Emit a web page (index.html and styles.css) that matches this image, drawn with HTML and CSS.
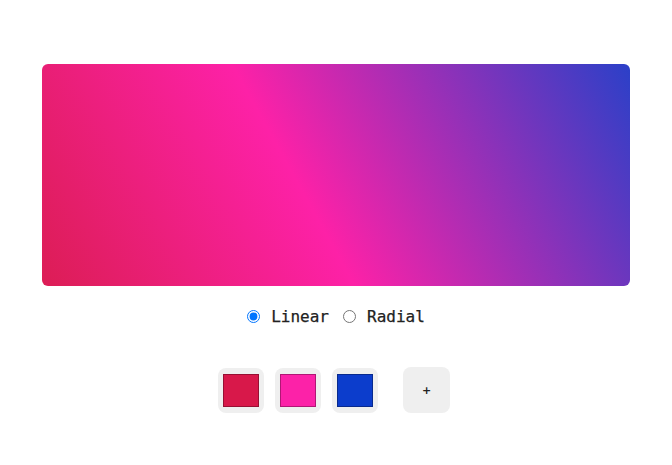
FILE: index.html
```html
<!DOCTYPE html>
<html lang="en">

    <head>
        <meta charset="UTF-8">
        <meta name="viewport" content="width=device-width, initial-scale=1.0">
        <title>Gradient Maker</title>
        <link rel="stylesheet" href="styles.css">
    </head>

    <body>
        <div class="container">
            <div class="preview"></div>

            <div class="options">
                <label class="option">
                    <input type="radio" name="type" value="linear" checked>
                    <span>Linear</span>
                </label>
                <label class="option">
                    <input type="radio" name="type" value="radial">
                    <span>Radial</span>
                </label>
            </div>

            <div class="colors">
                <div class="swatch"><div class="chip crimson"></div></div>
                <div class="swatch"><div class="chip pink"></div></div>
                <div class="swatch"><div class="chip blue"></div></div>
                <button class="add">+</button>
            </div>
        </div>
    </body>

</html>
```

FILE: styles.css
```css
* {
    margin: 0;
    padding: 0;
    box-sizing: border-box;
}

body {
    background: #fff;
    font-family: 'DejaVu Sans Mono', 'Liberation Mono', monospace;
    color: #222;
}

.container {
    width: 588px;
    margin: 0 auto;
    padding-top: 64px;
}

.preview {
    height: 222px;
    border-radius: 6px;
    background: linear-gradient(61deg, #dc1d55 0%, #fd21a7 44%, #2b40c8 100%);
}

.options {
    display: flex;
    justify-content: center;
    gap: 14px;
    margin-top: 20px;
}

.option {
    display: inline-flex;
    align-items: center;
    gap: 11px;
    font-size: 16px;
    line-height: 21px;
    -webkit-text-stroke: 0.25px #222;
    cursor: pointer;
}

.option input {
    margin: 0;
    width: 13px;
    height: 13px;
}

.colors {
    display: flex;
    justify-content: center;
    align-items: center;
    gap: 11px;
    margin-top: 40px;
    padding-right: 4px;
}

.swatch {
    width: 46px;
    height: 45px;
    border-radius: 8px;
    background: #efefef;
    display: flex;
    align-items: center;
    justify-content: center;
}

.chip {
    width: 36px;
    height: 33px;
    border: 1px solid rgba(0, 0, 0, 0.3);
}

.crimson {
    background: #d8184a;
}

.pink {
    background: #fc22a8;
}

.blue {
    background: #0c3dcc;
}

.add {
    width: 47px;
    height: 46px;
    margin-left: 14px;
    border: none;
    border-radius: 8px;
    background: #efefef;
    font-family: 'DejaVu Sans', sans-serif;
    font-size: 11px;
    font-weight: bold;
    color: #222;
    cursor: pointer;
}
```
